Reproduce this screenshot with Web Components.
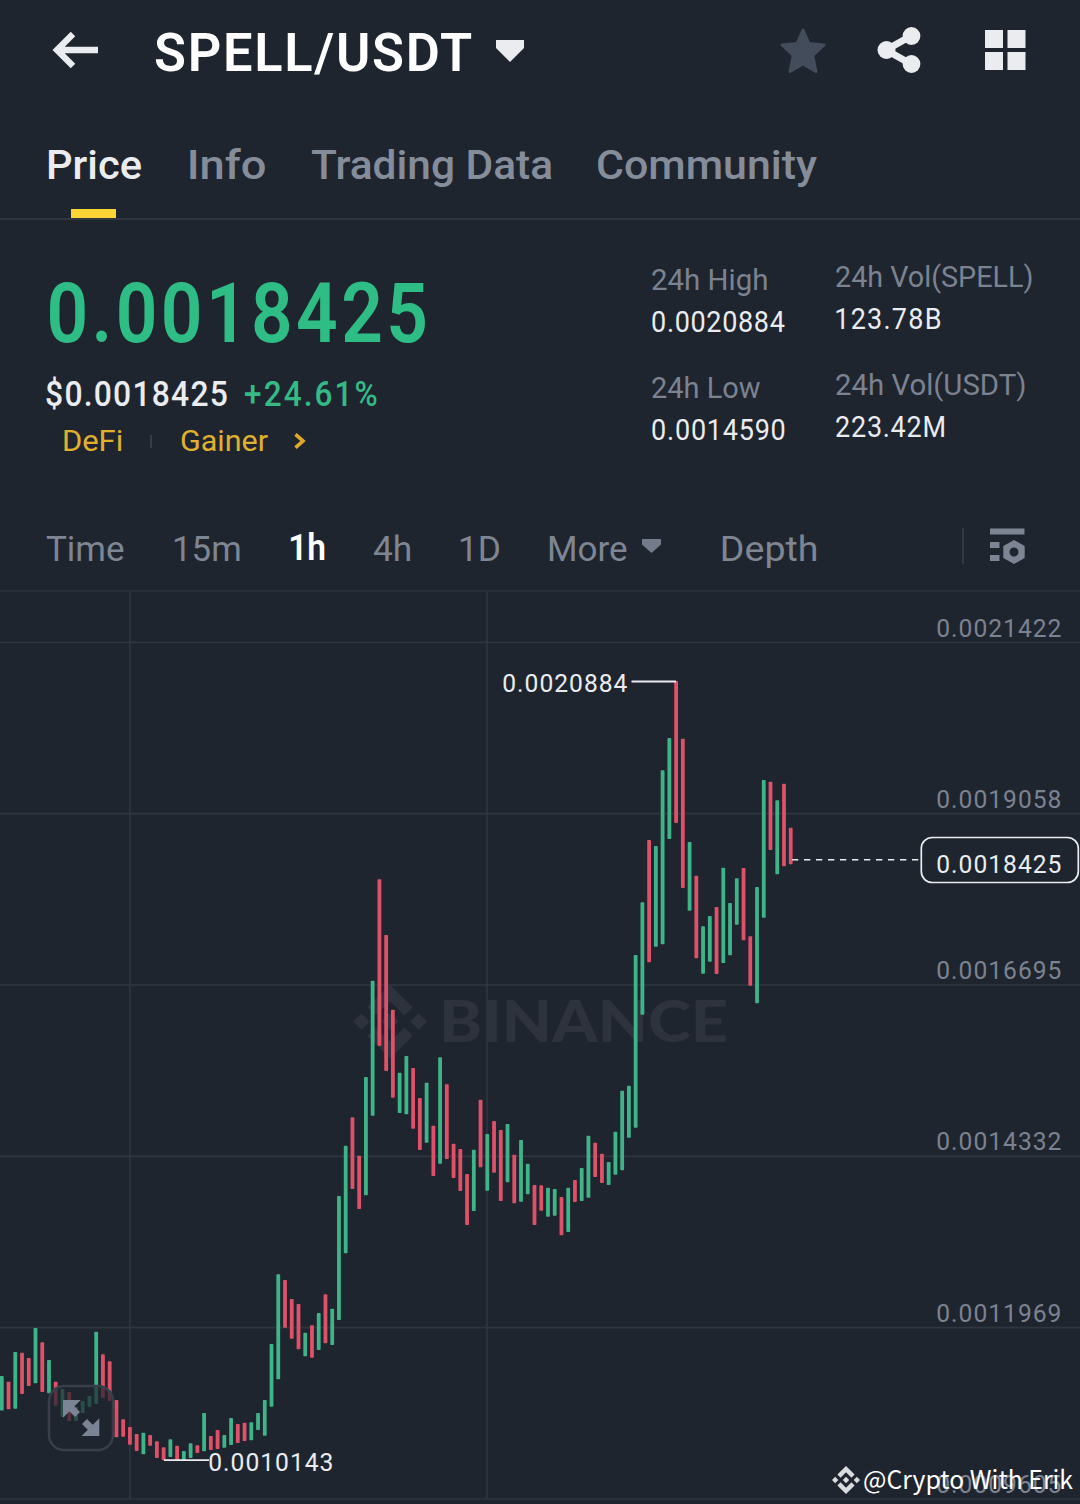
<!DOCTYPE html>
<html lang="en">
<head>
<meta charset="utf-8">
<title>SPELL/USDT</title>
<style>
html,body{margin:0;background:#1f252f}
body{width:1080px;height:1504px;overflow:hidden;font-family:Roboto,"Liberation Sans",sans-serif;color:#eaecef}
</style>
</head>
<body>
<market-page></market-page>
<script>
const LOGO='M38.73 53.2l24.59-24.58 24.6 24.6 14.3-14.31L63.32 0 24.42 38.9zM0 63.31l14.3-14.31 14.31 14.31-14.31 14.3zM38.73 73.41l24.59 24.59 24.6-24.6 14.31 14.29-38.91 38.91-38.91-38.88zM98 63.31l14.31-14.31 14.3 14.3-14.31 14.32zM77.83 63.3L63.32 48.78 48.82 63.29l14.5 14.48z';
const pen=document.createElement('canvas').getContext('2d');

/* One line of text whose ink spans exactly `w` pixels: `size`, `weight`, optional glyph stretch `sx`. */
class FitText extends HTMLElement{
  constructor(){super();this.attachShadow({mode:'open'}).innerHTML=
    '<style>:host{display:block;flex:none;white-space:nowrap;line-height:1}span{display:inline-block;transform-origin:0 50%}</style><span><slot></slot></span>';}
  connectedCallback(){
    const w=+this.getAttribute('w'),size=+this.getAttribute('size'),weight=this.getAttribute('weight')||400;
    const text=this.textContent,span=this.shadowRoot.querySelector('span');
    const family=this.getAttribute('family')||'Roboto';
    pen.font=`${weight} ${size}px "${family}"`;
    const m=pen.measureText(text),ink=m.actualBoundingBoxLeft+m.actualBoundingBoxRight;
    let sx=+this.getAttribute('sx'),ls=0;
    if(sx)ls=(w/sx-ink)/(text.length-1);else sx=w/ink;
    this.style.width=w+'px';
    this.style.height=size+'px';
    span.style.cssText=`font:${weight} ${size}px/${size}px "${family}",sans-serif;letter-spacing:${ls}px;transform:translateX(${m.actualBoundingBoxLeft*sx}px) scaleX(${sx})`;
  }
}
customElements.define('fit-text',FitText);

const define=(name,css,html)=>customElements.define(name,class extends HTMLElement{
  constructor(){super();this.attachShadow({mode:'open'}).innerHTML=`<style>${css}</style>${html}`;}
});

define('pair-header',`
:host{display:flex;align-items:center;height:104px;box-sizing:border-box;padding:0 54px 0 52px}
svg{display:block;flex:none}.back{margin-right:57px}.caret{margin-left:24px;margin-right:256px}.star{margin-right:51px}.share{margin-right:65px}
fit-text{color:#fff;margin-top:2px}svg{margin-top:-4px}svg.caret{margin-top:-3px}svg.star{margin-top:-2px}`,`
<svg class="back" width="46" height="38" viewBox="0 0 46 38" fill="none" stroke="#eaecef" stroke-width="6.400"><path d="M46 19H5M21 3L5 19l16 16"/></svg>
<fit-text w="317" size="54" weight="600" sx=".97">SPELL/USDT</fit-text>
<svg class="caret" width="28" height="22" viewBox="0 0 28 22"><path d="M0 0h28v8L14 22 0 8z" fill="#eaecef"/></svg>
<svg class="star" width="46" height="46" viewBox="0 0 46 46"><path d="M23 2l6 13.5 15 1.5-11.3 10.5L36 43.5 23 36 10 43.5l3.3-16L2 17l15-1.5z" fill="#434c5a" stroke="#434c5a" stroke-width="3" stroke-linejoin="round"/></svg>
<svg class="share" width="44" height="46" viewBox="0 0 44 46" fill="#eaecef"><path d="M34 9L9 23l25 14" fill="none" stroke="#eaecef" stroke-width="7"/><circle cx="9.500" cy="23" r="9"/><circle cx="34.500" cy="9" r="8.900"/><circle cx="34.500" cy="37" r="8.900"/></svg>
<svg width="41" height="40" viewBox="0 0 41 40" fill="#eaecef" style="margin-left:-1px"><path d="M0 0h18v18H0zM22.5 0h18v18h-18zM0 22h18v18H0zM22.5 22h18v18h-18z"/></svg>`);

define('section-tabs',`
:host{display:flex;align-items:center;height:116px;box-sizing:border-box;border-bottom:2px solid #303640;padding:8px 0 0 48px;color:#858d9b}
.on{color:#eaecef;display:flex;flex-direction:column;align-items:center;height:100%;justify-content:flex-end}
.on i{width:45px;height:9px;background:#fcd535;margin:23px 2px 0 0}
.a{margin-left:49px}.b{margin-left:46px}`,`
<div class="on"><fit-text w="93" size="41" weight="500">Price</fit-text><i></i></div>
<fit-text class="a" w="75" size="41" weight="500">Info</fit-text>
<fit-text class="b" w="241" size="41" weight="500">Trading Data</fit-text>
<fit-text class="b" w="219" size="41" weight="500">Community</fit-text>`);

define('stat-item',`:host{display:flex;flex-direction:column;gap:12px;height:108px}::slotted([slot=label]){color:#7b8290}`,
'<slot name="label"></slot><slot></slot>');

define('price-summary',`
:host{display:flex;height:281px;box-sizing:border-box;padding-left:46px}
.left{width:605.500px;padding-top:52px;box-sizing:border-box}
.big{color:#2ebd85;margin-left:4px}
.row{display:flex;align-items:center}
.usd{margin-top:21.500px}.up{color:#35b985;margin-left:18px}
.tags{margin-top:15px;padding-left:18px;color:#e0b02f}
.tags i{width:2px;height:13px;background:#363d48;margin:0 29px 0 28px}.tags svg{margin:-1px 0 0 26px}
.c1{width:184px;padding-top:45px}.c2{padding-top:42px}`,`
<div class="left">
<fit-text class="big" w="375" size="83" weight="600" sx=".88">0.0018425</fit-text>
<div class="row usd"><fit-text w="181" size="35" weight="500" sx=".91">$0.0018425</fit-text><fit-text class="up" w="132" size="35" weight="500" sx=".9">+24.61%</fit-text></div>
<div class="row tags"><fit-text w="58" size="29.500">DeFi</fit-text><i></i><fit-text w="87" size="29.500">Gainer</fit-text><svg width="12" height="16" viewBox="0 0 12 16" fill="none" stroke="#e0a928" stroke-width="3.6"><path d="M1.5 1.3L9 8l-7.500 6.700"/></svg></div>
</div>
<div class="c1">
<stat-item><fit-text slot="label" w="115" size="30">24h High</fit-text><fit-text w="133" size="30" sx=".9">0.0020884</fit-text></stat-item>
<stat-item><fit-text slot="label" w="108" size="30">24h Low</fit-text><fit-text w="133" size="30" sx=".9">0.0014590</fit-text></stat-item>
</div>
<div class="c2">
<stat-item><fit-text slot="label" w="196" size="30">24h Vol(SPELL)</fit-text><fit-text w="104" size="30" sx=".9">123.78B</fit-text></stat-item>
<stat-item><fit-text slot="label" w="189" size="30">24h Vol(USDT)</fit-text><fit-text w="108" size="30" sx=".9">223.42M</fit-text></stat-item>
</div>`);

define('interval-bar',`
:host{display:flex;align-items:center;height:91px;box-sizing:border-box;border-bottom:2px solid #292f39;padding:7px 50px 0 46px;color:#7f8693}
.on{color:#fff;margin:0 48px 3px 50px}.g{margin-left:50px}.g.m{margin-left:50px}.c{margin:0 61px 7px 15px}i{width:2px;height:36px;background:#323944;margin:0 26px 6px 146px;flex:none}
svg{flex:none}.cfg{margin-bottom:6px}`,`
<fit-text w="78" size="35">Time</fit-text>
<fit-text class="g" w="66" size="35">15m</fit-text>
<fit-text class="on" w="35" size="36" weight="600">1h</fit-text>
<fit-text w="37" size="35">4h</fit-text>
<fit-text class="g" w="39" size="35">1D</fit-text>
<fit-text class="g m" w="78" size="35">More</fit-text>
<svg class="c" width="19" height="14" viewBox="0 0 19 14"><path d="M0 0h19v5.500L9.500 14 0 5.500z" fill="#737b8a"/></svg>
<fit-text w="94" size="35">Depth</fit-text><i></i>
<svg class="cfg" width="35" height="36" viewBox="0 0 35 36" fill="#7d8595"><path d="M0 .5h34.500v6H0zM0 14h9.500v6H0zM0 27h9.500v6H0z"/><path fill-rule="evenodd" d="M24 12l10.700 6v12L24 36l-10.700-6V18zM24 19.500a4.500 4.500 0 1 0 .01 0z"/></svg>`);

/* Candles as direction, high y, low y, in page coordinates; one every 6.743px. */
const CANDLES=`G1376 1410.5,R1381.7 1409.3,G1352 1408.7,R1352.7 1394,R1358 1386,G1328 1383.3,R1342.3 1392,G1360 1393.3,R1381.7 1405.7,G1389 1417,R1392 1421,G1407 1421,G1401 1413,G1396 1407,G1331.7 1404,R1354.3 1398,R1361.3 1401,R1400 1437.3,R1419.3 1436.7,R1427 1444.7,R1434 1451,G1432.7 1454.3,R1435 1445.7,R1441.3 1458,R1447.3 1460.3,G1439.3 1457,R1445.7 1460,G1451 1460,G1443.3 1458,R1445.3 1453,G1413 1451.3,R1436 1450,R1430 1449,G1435 1447.7,G1418 1445,R1424 1443,R1422.7 1441,G1422.3 1440.3,G1413 1430,G1400 1435.7,G1344 1406.7,G1274.3 1379.3,R1280 1327.7,R1299 1338.7,R1304 1349.3,G1332.7 1356.3,R1325.3 1357.7,G1313 1350,R1294.3 1343.3,G1308.7 1345,G1196 1320,G1145.7 1253.3,R1117.3 1189,R1155.7 1209,G1077 1195.3,G980.7 1115.7,R879.3 1045.7,R935 1071,R1009.7 1097.7,G1072.7 1113,G1056 1114.3,R1068 1128.7,R1098 1150,G1082.7 1142.7,R1125.7 1176,G1057.3 1163.7,R1084.3 1159,R1143.7 1178,R1149 1191,R1174 1225,G1149.7 1211,R1099.7 1167.3,G1134 1190.7,R1121 1172.7,R1130 1201,G1124 1182.3,R1154.7 1203.3,G1140 1201.7,G1163.7 1194.3,R1185 1225,R1185.3 1210.7,G1187.7 1216.7,G1189 1215.7,R1197 1235.3,G1187.7 1232,R1180 1202,G1168 1201,G1135.7 1197.7,R1142.7 1177,R1153.7 1183,G1162 1185,G1131.7 1174.7,G1090.7 1170.3,G1085.7 1137.7,G955 1127.7,G902.3 1014.7,R840 962.3,G846 946.7,G770.3 944.3,G738 839,R681 823,R738.7 888,G842 910.7,R875.7 958.3,G926.3 973.7,G916 961.7,R907 974,G867.7 963,G903 955.3,G878.3 924.7,R868 940.3,R936.3 985.7,G887 1003.3,G780 917.7,R781.7 850,G800.3 874.3,R783.7 866.3,R827.7 864.3`.split(',');
const bars=CANDLES.map((c,i)=>{const[a,b]=c.slice(1).split(' ').map(Number);
  return `<rect x="${(6.743*i-.1).toFixed(2)}" y="${a}" width="3.8" height="${(b-a).toFixed(1)}" rx=".8" fill="${c[0]==='G'?'#3fb488':'#df5168'}"/>`}).join('');
const grid=[642.5,813.7,985,1156.3,1327.7,1499].map(y=>`M0 ${y}H1080`).join('')+'M130 592V1499M487 592V1499';
/* Condensed digits with open spacing, 124px of ink from x; y is the middle of the digits. */
const price=(t,x,y)=>`<text transform="translate(${x-.7} ${y+9}) scale(.93 1)" textLength="134.500" lengthAdjust="spacing">${t}</text>`;
const axis=[['0.0021422',627.5],['0.0019058',798.5],['0.0016695',969.5],['0.0014332',1140.5],['0.0011969',1312.5],['0.0009605',1483.5]]
  .map(([t,y])=>price(t,937,y)).join('');

define('candle-chart',`
:host{display:block;height:912px}svg{display:block}text{font:400 26.5px Roboto,sans-serif;fill:#eaecef}
.ax text{fill:#7b8290}text.wm{font:900 57px Lato,sans-serif;fill:#2d323d}text.by{font:400 25px "Noto Sans CJK SC",sans-serif;fill:#fff}`,`
<svg width="1080" height="912" viewBox="0 592 1080 912">
<path d="${grid}" stroke="#303640" stroke-width="1.700" fill="none"/>
<path d="${LOGO}" transform="translate(353 984.500) scale(.5845)" fill="#2d323d"/>
<text class="wm" x="439" y="1041.500" textLength="289" lengthAdjust="spacingAndGlyphs">BINANCE</text>
${bars}
<path d="M631.500 681.500H676M164 1460.200H209" stroke="#eaecef" stroke-width="1.800"/>
${price('0.0020884',503,682.5)}${price('0.0010143',209,1461.5)}
<g class="ax">${axis}</g>
<path d="M792 859.700H920" stroke="#eaecef" stroke-width="1.600" stroke-dasharray="6.300 5.700"/>
<rect x="921.300" y="837.500" width="157" height="45" rx="11" fill="#1f252f" stroke="#eaecef" stroke-width="1.700"/>
${price('0.0018425',937,863.5)}
<rect x="49" y="1386" width="64" height="64" rx="15" fill="#1f252f" fill-opacity=".7" stroke="#383e4a" stroke-width="2.500"/>
<path d="M63 1400h17.700L63 1417.700zM99.300 1436v-17.700L81.600 1436z" fill="#7b8495"/>
<path d="M69 1406l8.500 8.500M93 1430l-8.500-8.500" stroke="#7b8495" stroke-width="7"/>
<path d="${LOGO}" transform="translate(832 1466) scale(.2212)" fill="#dadbdd"/>
<text class="by" x="863" y="1489" textLength="210" lengthAdjust="spacingAndGlyphs">@Crypto With Erik</text>
</svg>`);

define('market-page',':host{display:flex;flex-direction:column;width:1080px;height:1504px;background:#1f252f}pair-header,section-tabs,price-summary,interval-bar,candle-chart{flex:none}',
'<pair-header></pair-header><section-tabs></section-tabs><price-summary></price-summary><interval-bar></interval-bar><candle-chart></candle-chart>');
</script>
</body>
</html>
